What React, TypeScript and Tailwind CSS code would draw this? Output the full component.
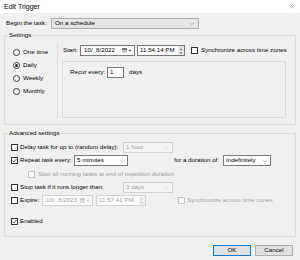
import { ChevronDown, X } from 'lucide-react';

function Check({ checked, disabled }: { checked?: boolean; disabled?: boolean }) {
  return (
    <span
      className={`flex w-[7px] h-[7px] shrink-0 items-center justify-center border bg-white ${
        disabled ? 'border-[#c4c4c4]' : 'border-[#333333]'
      }`}
    >
      {checked && (
        <svg width="5" height="5" viewBox="0 0 10 10">
          <path d="M1 5.2 L4 8 L9 1.8" fill="none" stroke="#222" strokeWidth="1.4" />
        </svg>
      )}
    </span>
  );
}

function Radio({ label, checked }: { label: string; checked?: boolean }) {
  return (
    <div className="flex h-[13px] items-center">
      <span className="flex w-[7px] h-[7px] items-center justify-center rounded-full border border-[#333333] bg-white">
        {checked && <span className="w-[3px] h-[3px] rounded-full bg-[#222]" />}
      </span>
      <span className="ml-[3px]">{label}</span>
    </div>
  );
}

function Combo({ value, w, disabled }: { value: string; w: string; disabled?: boolean }) {
  return (
    <div
      className={`flex h-[11px] shrink-0 items-center justify-between pl-[2px] pr-[2px] border ${w} ${
        disabled ? 'border-[#d0d0d0] bg-[#f4f4f4] text-[#a0a0a0]' : 'border-[#7a7a7a] bg-white'
      }`}
    >
      <span>{value}</span>
      <ChevronDown size={6} strokeWidth={1.5} color={disabled ? '#b0b0b0' : '#555'} />
    </div>
  );
}

function DateBox({ value, w, disabled }: { value: string; w: string; disabled?: boolean }) {
  return (
    <div
      className={`flex h-[11px] shrink-0 items-center justify-between pl-[3px] pr-[2px] border bg-white ${w} ${
        disabled ? 'border-[#d0d0d0] text-[#a0a0a0]' : 'border-[#7a7a7a]'
      }`}
    >
      <span className="whitespace-pre">{value}</span>
      <span className="flex items-center gap-[1px]">
        <span className={`w-[5px] h-[5px] border-t-[2px] ${disabled ? 'bg-[#dcdcdc] border-[#c8c8c8]' : 'bg-[#c8c8c8] border-[#777]'}`} />
        <span className={`text-[4px] ${disabled ? 'text-[#b0b0b0]' : 'text-[#333]'}`}>▼</span>
      </span>
    </div>
  );
}

function TimeBox({ value, w, disabled }: { value: string; w: string; disabled?: boolean }) {
  return (
    <div
      className={`flex h-[11px] shrink-0 items-center justify-between pl-[2px] border bg-white ${w} ${
        disabled ? 'border-[#d0d0d0] text-[#a0a0a0]' : 'border-[#7a7a7a]'
      }`}
    >
      <span>{value}</span>
      <span
        className={`flex h-full w-[6px] flex-col items-center justify-center text-[3px] leading-[4px] ${
          disabled ? 'bg-[#f0f0f0] text-[#b0b0b0]' : 'bg-[#e4e4e4] text-[#333]'
        }`}
      >
        <span>▲</span>
        <span>▼</span>
      </span>
    </div>
  );
}

export default function App() {
  return (
    <div
      className="flex w-[300px] h-[260px] flex-col whitespace-nowrap bg-[#f0f0f0] text-[6.2px] leading-none text-black"
      style={{ fontFamily: '"Liberation Sans", Arial, sans-serif' }}
    >
      <div className="flex h-[13px] items-center justify-between bg-white pl-[4px] pr-[4px]">
        <span className="text-[7px]">Edit Trigger</span>
        <X size={7} strokeWidth={1.2} color="#333" />
      </div>

      <div className="flex flex-col pl-[4px]">
        <div className="mt-[5px] flex h-[11px] items-center">
          <span className="ml-[2px] w-[45px] shrink-0">Begin the task:</span>
          <div className="flex h-[11px] w-[148px] items-center justify-between border border-[#adadad] bg-[#e5e5e5] pl-[3px] pr-[3px]">
            <span>On a schedule</span>
            <ChevronDown size={6} strokeWidth={1.5} color="#555" />
          </div>
        </div>

        {/* Settings */}
        <div className="relative mt-[6px] flex h-[90px] w-[292px] border border-[#dcdcdc]">
          <span className="absolute -top-[4px] left-[3px] bg-[#f0f0f0] px-[1px]">Settings</span>
          <div className="mt-[7px] flex h-[75px] w-[53px] shrink-0 flex-col border-r border-[#dcdcdc] pl-[8px] pt-[3px]">
            <Radio label="One time" />
            <Radio label="Daily" checked />
            <Radio label="Weekly" />
            <Radio label="Monthly" />
          </div>
          <div className="flex flex-col pt-[9px]">
            <div className="flex h-[11px] items-center pl-[5px]">
              <span className="w-[17px] shrink-0">Start:</span>
              <DateBox value="10/  8/2022" w="w-[55px]" />
              <div className="ml-[2px]">
                <TimeBox value="11:54:14 PM" w="w-[48px]" />
              </div>
              <div className="ml-[6px] flex items-center">
                <Check />
                <span className="ml-[3px]">Synchronize across time zones</span>
              </div>
            </div>
            <div className="ml-[4px] mt-[5px] flex h-[57px] w-[224px] flex-col border border-[#dcdcdc] pl-[7px] pt-[5px]">
              <div className="flex h-[11px] items-center">
                <span className="w-[37px] shrink-0">Recur every:</span>
                <div className="flex h-[11px] w-[17px] items-center border border-[#7a7a7a] bg-white pl-[2px]">1</div>
                <span className="ml-[5px]">days</span>
              </div>
            </div>
          </div>
        </div>

        {/* Advanced settings */}
        <div className="relative mt-[8px] flex h-[104px] w-[292px] flex-col border border-[#dcdcdc] pl-[6px] pt-[8px]">
          <span className="absolute -top-[4px] left-[3px] bg-[#f0f0f0] px-[1px]">Advanced settings</span>

          <div className="flex h-[11px] items-center">
            <Check />
            <span className="ml-[2px] w-[103px] shrink-0">Delay task for up to (random delay):</span>
            <Combo value="1 hour" w="w-[50px]" disabled />
          </div>

          <div className="mt-[2px] flex h-[11px] items-center">
            <Check checked />
            <span className="ml-[2px] w-[54px] shrink-0">Repeat task every:</span>
            <Combo value="5 minutes" w="w-[54px]" />
            <span className="ml-[46px] w-[49px] shrink-0">for a duration of:</span>
            <Combo value="Indefinitely" w="w-[48px]" />
          </div>

          <div className="mt-[3px] flex h-[11px] items-center pl-[17px] text-[#a0a0a0]">
            <Check disabled />
            <span className="ml-[3px]">Stop all running tasks at end of repetition duration</span>
          </div>

          <div className="mt-[2px] flex h-[11px] items-center">
            <Check />
            <span className="ml-[2px] w-[103px] shrink-0">Stop task if it runs longer than:</span>
            <Combo value="3 days" w="w-[50px]" disabled />
          </div>

          <div className="mt-[2px] flex h-[11px] items-center">
            <Check />
            <span className="ml-[2px] w-[22px] shrink-0">Expire:</span>
            <DateBox value="10/  8/2023" w="w-[51px]" disabled />
            <div className="ml-[3px]">
              <TimeBox value="11:57:41 PM" w="w-[50px]" disabled />
            </div>
            <div className="ml-[32px] flex items-center text-[#a0a0a0]">
              <Check disabled />
              <span className="ml-[2px]">Synchronize across time zones</span>
            </div>
          </div>

          <div className="mt-[10px] flex h-[11px] items-center">
            <Check checked />
            <span className="ml-[2px]">Enabled</span>
          </div>
        </div>
      </div>

      <div className="mt-[8px] flex justify-end gap-[4px] pr-[7px]">
        <button className="flex h-[11px] w-[38px] items-center justify-center border border-[#0078d7] bg-[#e1e1e1]">
          OK
        </button>
        <button className="flex h-[11px] w-[38px] items-center justify-center border border-[#adadad] bg-[#e1e1e1]">
          Cancel
        </button>
      </div>
    </div>
  );
}
